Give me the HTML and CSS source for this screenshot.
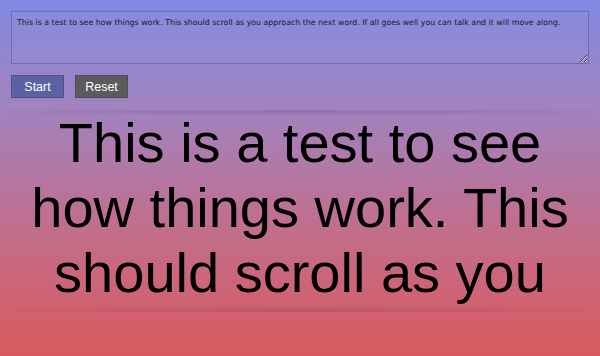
FILE: index.html
```html
<!DOCTYPE html>
<html>
<head>
<meta charset="utf-8">
<link rel="stylesheet" href="styles.css">
</head>
<body>
<div class="page">
  <textarea class="source">This is a test to see how things work. This should scroll as you approach the next word. If all goes well you can talk and it will move along.</textarea>
  <div class="controls">
    <button class="btn btn-start">Start</button>
    <button class="btn btn-reset">Reset</button>
  </div>
  <div class="reader">
    <p class="reader-text">This is a test to see how things work. This should scroll as you</p>
  </div>
</div>
</body>
</html>
```
FILE: styles.css
```css
html, body {
  margin: 0;
  height: 100%;
}
body {
  background: linear-gradient(180deg, #8189e1 0%, #a183bf 30%, #c26d8c 65%, #da5a5e 100%);
  font-family: "Liberation Sans", Arial, sans-serif;
  overflow: hidden;
}
.page {
  padding: 11px 11px 0 11px;
  display: flex;
  flex-direction: column;
}
.source {
  box-sizing: border-box;
  width: 578px;
  height: 53px;
  margin: 0;
  padding: 5px 5px;
  border: 1px solid rgba(70, 70, 130, 0.45);
  background: rgba(255, 255, 255, 0.03);
  font-family: "DejaVu Sans", Verdana, sans-serif;
  font-size: 7.85px;
  line-height: 12px;
  color: #1a1a26;
  resize: both;
  outline: none;
}
.controls {
  display: flex;
  gap: 11px;
  margin-top: 11px;
}
.btn {
  width: 53px;
  height: 23px;
  border: 1px dotted rgba(40, 40, 60, 0.5);
  color: #fff;
  font-family: "Liberation Sans", Arial, sans-serif;
  font-size: 12.5px;
  padding: 0;
  cursor: pointer;
}
.btn-start {
  background: #5a62a4;
}
.btn-reset {
  background: #5b5a5c;
}
.reader {
  position: relative;
  margin: 12px -11px 0 -11px;
  height: 202px;
  overflow: hidden;
}
.reader::before,
.reader::after {
  content: "";
  position: absolute;
  left: 0;
  right: 0;
  height: 5px;
  background: linear-gradient(90deg, rgba(60, 40, 80, 0) 0%, rgba(60, 40, 80, 0.12) 30%, rgba(60, 40, 80, 0.14) 50%, rgba(60, 40, 80, 0.12) 70%, rgba(60, 40, 80, 0) 100%);
  filter: blur(1px);
}
.reader::before {
  top: -1px;
}
.reader::after {
  bottom: -1px;
}
.reader-text {
  margin: 0;
  padding: 0 24px;
  text-align: center;
  font-family: "Liberation Sans", Arial, Helvetica, sans-serif;
  font-size: 56px;
  color: #000;
}
```
